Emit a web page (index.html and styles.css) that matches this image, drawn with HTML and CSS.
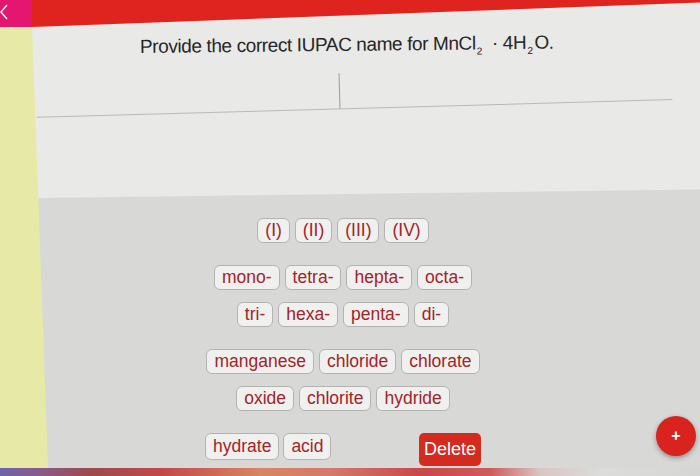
FILE: index.html
```html
<!DOCTYPE html>
<html lang="en">
<head>
<meta charset="utf-8">
<title>IUPAC name</title>
<link rel="stylesheet" href="styles.css">
</head>
<body>
<div class="app">
  <header class="topbar">
    <div class="back">
      <svg width="32" height="27" viewBox="0 0 32 27" aria-hidden="true"><polyline points="7,5 1,12 7,19" fill="none" stroke="#fff" stroke-width="1.4"/></svg>
    </div>
    <div class="redbar"></div>
  </header>
  <div class="workspace">
    <aside class="side"></aside>
    <main class="main">
      <section class="question">
        <p class="prompt">Provide the correct IUPAC name for MnCl<sub>2</sub><span class="dot">·</span>4H<sub>2</sub>O.</p>
        <div class="answer-line"><span class="cursor"></span></div>
      </section>
      <section class="answers">
        <div class="tokens">
          <div class="group">
            <div class="row">
              <span class="tok">(I)</span><span class="tok">(II)</span><span class="tok">(III)</span><span class="tok">(IV)</span>
            </div>
          </div>
          <div class="group">
            <div class="row">
              <span class="tok">mono-</span><span class="tok">tetra-</span><span class="tok">hepta-</span><span class="tok">octa-</span>
            </div>
            <div class="row">
              <span class="tok">tri-</span><span class="tok">hexa-</span><span class="tok">penta-</span><span class="tok">di-</span>
            </div>
          </div>
          <div class="group">
            <div class="row">
              <span class="tok">manganese</span><span class="tok">chloride</span><span class="tok">chlorate</span>
            </div>
            <div class="row">
              <span class="tok">oxide</span><span class="tok">chlorite</span><span class="tok">hydride</span>
            </div>
          </div>
          <div class="actions">
            <span class="tok">hydrate</span><span class="tok">acid</span>
            <button class="delete" type="button">Delete</button>
          </div>
        </div>
      </section>
    </main>
  </div>
  <div class="bottom-strip"></div>
  <button class="fab" type="button" aria-label="Add">+</button>
</div>
</body>
</html>
```

FILE: styles.css
```css
* { box-sizing: border-box; }
html, body { margin: 0; padding: 0; }
body {
  width: 700px;
  height: 476px;
  overflow: hidden;
  font-family: "Liberation Sans", Arial, sans-serif;
  background: #e8e8e6;
}
.app {
  position: relative;
  width: 700px;
  height: 476px;
  display: flex;
  flex-direction: column;
  background: #e9e9e7;
}
.topbar {
  display: grid;
  grid-template-columns: 32px 1fr;
  height: 27px;
  flex: none;
}
.back {
  background: #e5166f;
  overflow: hidden;
}
.back svg { display: block; }
.redbar {
  background: #df2420;
  clip-path: polygon(0 0, 100% 0, 100% 9%, 0 100%);
}
.workspace {
  flex: 1;
  display: grid;
  grid-template-columns: 48px 1fr;
  background: linear-gradient(179.26deg, #e9e9e7 171px, #d8d9d6 172px);
}
.side {
  background: linear-gradient(87.92deg, #e7eaa6 47.5px, transparent 48.5px);
}
.main {
  display: flex;
  flex-direction: column;
}
.question {
  height: 172px;
  padding-top: 9px;
}
.prompt {
  margin: 0 0 0 92px;
  font-size: 19px;
  line-height: 22px;
  letter-spacing: -0.4px;
  color: #262626;
  transform: rotate(-0.6deg);
  transform-origin: left center;
}
.prompt sub {
  font-size: 10px;
  vertical-align: -5px;
  line-height: 0;
  margin: 0 2px 0 1px;
}
.dot {
  margin: 0 5px 0 8px;
}
.answer-line {
  margin: 15px 0 0 -12px;
  width: 636px;
  height: 36px;
  border-bottom: 1px solid #b9b9b7;
  transform: rotate(-1.6deg);
}
.cursor {
  display: inline-block;
  margin-left: 303px;
  width: 1px;
  height: 35px;
  background: #9a9a98;
}
.answers {
  flex: 1;
  padding-top: 19px;
}
.tokens {
  width: 276px;
  margin-left: 157px;
  display: flex;
  flex-direction: column;
  gap: 22px;
}
.group {
  display: flex;
  flex-direction: column;
  gap: 12px;
}
.row {
  display: flex;
  justify-content: center;
  gap: 5px;
}
.tok {
  display: inline-block;
  height: 25px;
  padding: 0 7px;
  border: 1px solid #b3b3b1;
  border-radius: 6px;
  background: #f0f0ee;
  color: #a1242a;
  font-size: 17.5px;
  line-height: 23px;
  white-space: nowrap;
}
.actions {
  display: flex;
  align-items: flex-start;
  gap: 4px;
}
.actions .tok { height: 27px; line-height: 25px; }
.delete {
  margin-left: auto;
  height: 33px;
  padding: 0 5px;
  border: none;
  border-radius: 5px;
  background: #d42a20;
  color: #fff;
  font-family: "Liberation Sans", Arial, sans-serif;
  font-size: 18px;
  line-height: 33px;
}
.bottom-strip {
  flex: none;
  height: 8px;
  background: linear-gradient(to right, #6d63b0 0, #8a5a8a 40px, #9c4a4e 90px, #c4474a 160px, #d98462 260px, #d7786c 330px, #c9484a 420px, #cf5a5a 490px, #d9c6c4 540px, #dcdcda 600px, #d6d6d4 700px);
}
.fab {
  position: absolute;
  left: 656px;
  top: 416px;
  width: 40px;
  height: 40px;
  border: none;
  border-radius: 50%;
  background: #d8231e;
  color: #fff;
  font-family: "Liberation Sans", Arial, sans-serif;
  font-size: 16px;
  font-weight: bold;
  line-height: 40px;
  padding: 0;
  text-align: center;
  box-shadow: 0 2px 5px rgba(0, 0, 0, 0.35);
}
```
